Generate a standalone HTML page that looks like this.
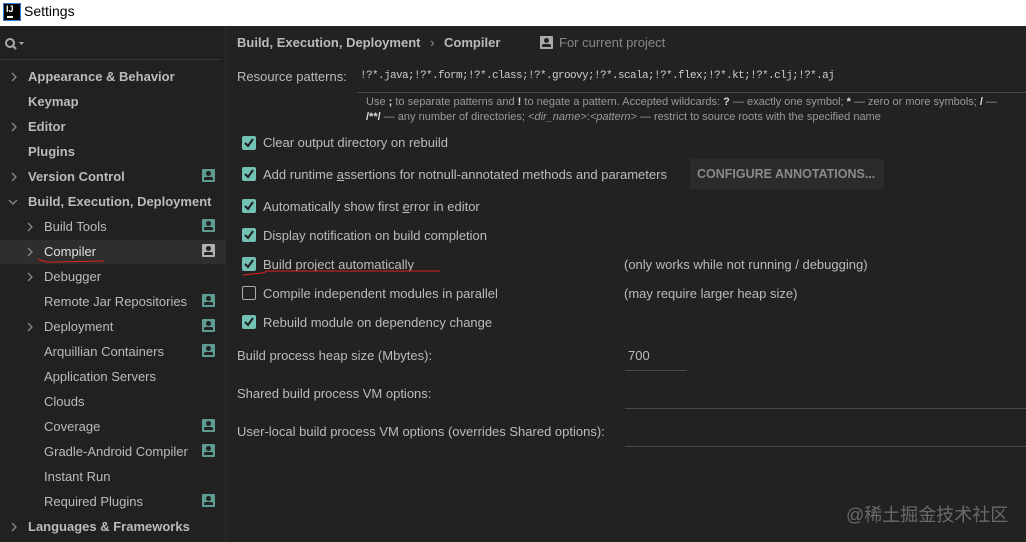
<!DOCTYPE html>
<html><head><style>
*{margin:0;padding:0;box-sizing:border-box}
body{width:1026px;height:542px;overflow:hidden;background:#222222;font-family:"Liberation Sans","Noto Sans CJK SC",sans-serif;font-size:13px;color:#bbbbbb;position:relative}
.a{position:absolute;white-space:nowrap}
.title{left:0;top:0;width:1026px;height:26px;background:#fff;color:#000;font-size:14px}
.side{left:0;top:26px;width:226px;height:516px;background:#212121;border-right:1px solid #2c2c2c}
.b{font-weight:bold}
.chev{position:absolute;width:8px;height:10px}
.pi{position:absolute;width:13px;height:13px;background:#5e9c93;border-radius:1px}
.pi:before{content:"";position:absolute;left:4px;top:2px;width:5px;height:5px;border-radius:50%;background:#212121}
.pi:after{content:"";position:absolute;left:2px;top:8px;width:9px;height:3px;background:#212121;border-radius:2px 2px 0 0}
.cb{position:absolute;width:14px;height:14px;background:#73c0b4;border-radius:2px}
.cb svg{position:absolute;left:0;top:0}
.ub{position:absolute;width:14px;height:14px;border:1px solid #aaa;border-radius:2px}
.line{position:absolute;height:1px;background:#4a4a4a}
</style></head><body>
<div class="a title">
<div class="a" style="left:3px;top:3px;width:18px;height:18px;background:#000;border:1px solid #2a7fd4"><span style="position:absolute;left:2px;top:0;color:#fff;font-size:9px;font-weight:bold">IJ</span><span style="position:absolute;left:3px;top:12px;width:6px;height:2px;background:#fff"></span></div>
<div class="a" style="left:24px;top:3px">Settings</div>
</div>
<div class="a side">
<svg class="a" style="left:4px;top:11px" width="20" height="14"><circle cx="6" cy="6" r="4" stroke="#aaa" stroke-width="2" fill="none"/><path d="M9 9 L12 12" stroke="#aaa" stroke-width="2"/><path d="M15 5 L20 5 L17.5 8Z" fill="#aaa"/></svg>
<div class="a" style="left:1px;top:33px;width:219px;height:1px;background:#3a3a3a"></div>
</div>
<div class="a" style="left:0;top:240px;width:226px;height:24px;background:#2e2e2e"></div>

<svg style="display:none"><symbol id="c" viewBox="0 0 8 10"><path d="M2 1 L6 5 L2 9" stroke="#888" stroke-width="1.3" fill="none"/></symbol></svg>
<svg class="chev" style="left:10px;top:72px"><use href="#c"/></svg><div class="a b" style="left:28px;top:69px">Appearance &amp; Behavior</div>
<div class="a b" style="left:28px;top:94px">Keymap</div>
<svg class="chev" style="left:10px;top:122px"><use href="#c"/></svg><div class="a b" style="left:28px;top:119px">Editor</div>
<div class="a b" style="left:28px;top:144px">Plugins</div>
<svg class="chev" style="left:10px;top:172px"><use href="#c"/></svg><div class="a b" style="left:28px;top:169px">Version Control</div><div class="pi" style="left:202px;top:169px"></div>
<svg class="a" style="left:8px;top:198px" width="10" height="8"><path d="M1 2 L5 6 L9 2" stroke="#888" stroke-width="1.3" fill="none"/></svg><div class="a b" style="left:28px;top:194px">Build, Execution, Deployment</div>
<svg class="chev" style="left:26px;top:222px"><use href="#c"/></svg><div class="a" style="left:44px;top:219px">Build Tools</div><div class="pi" style="left:202px;top:219px"></div>
<svg class="chev" style="left:26px;top:247px"><use href="#c"/></svg><div class="a" style="left:44px;top:244px;color:#e0e0e0">Compiler</div><div class="pi" style="left:202px;top:244px;background:#b0b0b0"></div>
<svg class="a" style="left:36px;top:256px" width="70" height="10"><path d="M2 3 Q10 7 18 6 L68 5" stroke="#e02020" fill="none" stroke-width="1"/></svg>
<svg class="chev" style="left:26px;top:272px"><use href="#c"/></svg><div class="a" style="left:44px;top:269px">Debugger</div>
<div class="a" style="left:44px;top:294px">Remote Jar Repositories</div><div class="pi" style="left:202px;top:294px"></div>
<svg class="chev" style="left:26px;top:322px"><use href="#c"/></svg><div class="a" style="left:44px;top:319px">Deployment</div><div class="pi" style="left:202px;top:319px"></div>
<div class="a" style="left:44px;top:344px">Arquillian Containers</div><div class="pi" style="left:202px;top:344px"></div>
<div class="a" style="left:44px;top:369px">Application Servers</div>
<div class="a" style="left:44px;top:394px">Clouds</div>
<div class="a" style="left:44px;top:419px">Coverage</div><div class="pi" style="left:202px;top:419px"></div>
<div class="a" style="left:44px;top:444px">Gradle-Android Compiler</div><div class="pi" style="left:202px;top:444px"></div>
<div class="a" style="left:44px;top:469px">Instant Run</div>
<div class="a" style="left:44px;top:494px">Required Plugins</div><div class="pi" style="left:202px;top:494px"></div>
<svg class="chev" style="left:10px;top:522px"><use href="#c"/></svg><div class="a b" style="left:28px;top:519px">Languages &amp; Frameworks</div>

<div class="a b" style="left:237px;top:35px">Build, Execution, Deployment <span style="font-weight:normal;color:#999;margin:0 6px">›</span> Compiler</div>
<div class="pi" style="left:540px;top:36px;background:#aaa"></div>
<div class="a" style="left:559px;top:35px;color:#888">For current project</div>

<div class="a" style="left:237px;top:69px">Resource patterns:</div>
<div class="a" style="left:360px;top:70px;font-family:'Liberation Mono',monospace;font-size:11px;letter-spacing:-0.6px;color:#ccc">!?*.java;!?*.form;!?*.class;!?*.groovy;!?*.scala;!?*.flex;!?*.kt;!?*.clj;!?*.aj</div>
<div class="line" style="left:357px;top:92px;width:669px"></div>
<div class="a" style="left:366px;top:96px;font-size:11px;color:#999">Use <b style="color:#ddd">;</b> to separate patterns and <b style="color:#ddd">!</b> to negate a pattern. Accepted wildcards: <b style="color:#ddd">?</b> — exactly one symbol; <b style="color:#ddd">*</b> — zero or more symbols; <b style="color:#ddd">/</b> —</div>
<div class="a" style="left:366px;top:111px;font-size:11px;color:#999"><b style="color:#ddd">/**/</b> — any number of directories; <i>&lt;dir_name&gt;</i>:<i>&lt;pattern&gt;</i> — restrict to source roots with the specified name</div>

<div class="cb" style="left:242px;top:136px"><svg width="14" height="14"><path d="M3 7 L6 10 L11 3" stroke="#1e1e1e" stroke-width="2" fill="none"/></svg></div>
<div class="a" style="left:263px;top:135px">Clear output directory on rebuild</div>
<div class="cb" style="left:242px;top:167px"><svg width="14" height="14"><path d="M3 7 L6 10 L11 3" stroke="#1e1e1e" stroke-width="2" fill="none"/></svg></div>
<div class="a" style="left:263px;top:167px">Add runtime <u>a</u>ssertions for notnull-annotated methods and parameters</div>
<div class="a" style="left:690px;top:159px;width:194px;height:30px;background:#2b2b2b"></div>
<div class="a b" style="left:697px;top:167px;color:#8a8a8a;font-size:12.5px">CONFIGURE ANNOTATIONS...</div>
<div class="cb" style="left:242px;top:199px"><svg width="14" height="14"><path d="M3 7 L6 10 L11 3" stroke="#1e1e1e" stroke-width="2" fill="none"/></svg></div>
<div class="a" style="left:263px;top:199px">Automatically show first <u>e</u>rror in editor</div>
<div class="cb" style="left:242px;top:228px"><svg width="14" height="14"><path d="M3 7 L6 10 L11 3" stroke="#1e1e1e" stroke-width="2" fill="none"/></svg></div>
<div class="a" style="left:263px;top:228px">Display notification on build completion</div>
<div class="cb" style="left:242px;top:257px"><svg width="14" height="14"><path d="M3 7 L6 10 L11 3" stroke="#1e1e1e" stroke-width="2" fill="none"/></svg></div>
<div class="a" style="left:263px;top:257px">Build project automatically</div>
<svg class="a" style="left:240px;top:268px" width="200" height="10"><path d="M3 7 L22 5 L28 3 L432 3" stroke="#e02020" fill="none" stroke-width="1"/></svg>
<div class="a" style="left:624px;top:257px">(only works while not running / debugging)</div>
<div class="ub" style="left:242px;top:286px"></div>
<div class="a" style="left:263px;top:286px">Compile independent modules in parallel</div>
<div class="a" style="left:624px;top:286px">(may require larger heap size)</div>
<div class="cb" style="left:242px;top:315px"><svg width="14" height="14"><path d="M3 7 L6 10 L11 3" stroke="#1e1e1e" stroke-width="2" fill="none"/></svg></div>
<div class="a" style="left:263px;top:315px">Rebuild module on dependency change</div>

<div class="a" style="left:237px;top:348px">Build process heap size (Mbytes):</div>
<div class="a" style="left:628px;top:348px">700</div>
<div class="line" style="left:625px;top:370px;width:62px"></div>
<div class="a" style="left:237px;top:386px">Shared build process VM options:</div>
<div class="line" style="left:625px;top:408px;width:401px"></div>
<div class="a" style="left:237px;top:424px">User-local build process VM options (overrides Shared options):</div>
<div class="line" style="left:625px;top:446px;width:401px"></div>
<div class="a" style="left:846px;top:501px;font-size:18px;color:#6a6a6a">@稀土掘金技术社区</div>
</body></html>
